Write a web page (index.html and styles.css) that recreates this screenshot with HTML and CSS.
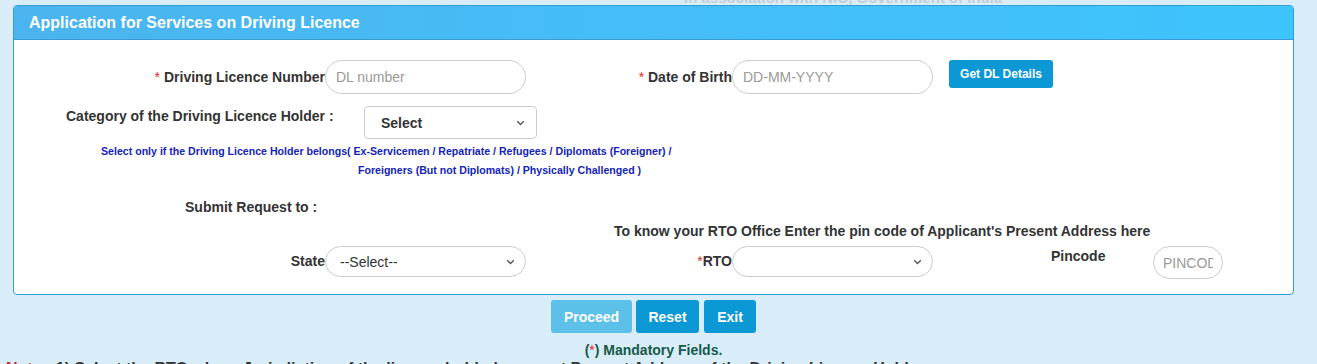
FILE: index.html
```html
<!DOCTYPE html>
<html lang="en">
<head>
<meta charset="utf-8">
<title>Application for Services on Driving Licence</title>
<link rel="stylesheet" href="styles.css">
</head>
<body>
<div class="masthead"><span>in association with NIC, Government of India</span></div>
<div class="panel">
  <div class="panel-head">Application for Services on Driving Licence</div>
  <div class="panel-body">
    <div class="row row-dl">
      <label class="lbl lbl-a"><span class="req">*</span> Driving Licence Number</label>
      <input class="pill" type="text" placeholder="DL number">
      <label class="lbl lbl-b"><span class="req">*</span> Date of Birth</label>
      <input class="pill" type="text" placeholder="DD-MM-YYYY">
      <button class="btn-dl" type="button">Get DL Details</button>
    </div>
    <div class="row row-cat">
      <label class="lbl-cat">Category of the Driving Licence Holder :</label>
      <div class="sel-wrap sel-cat">
        <select class="box-select"><option>Select</option></select>
        <svg class="chev" width="9" height="6" viewBox="0 0 9 6"><path d="M1.2 1.2l3.3 3.3 3.3-3.3" fill="none" stroke="#555" stroke-width="1.3"/></svg>
      </div>
    </div>
    <div class="hint">
      <span class="hint-1">Select only if the Driving Licence Holder belongs( Ex-Servicemen / Repatriate / Refugees / Diplomats (Foreigner) /</span>
      <span class="hint-2">Foreigners (But not Diplomats) / Physically Challenged )</span>
    </div>
    <div class="submit-to">Submit Request to :</div>
    <div class="rto-info">To know your RTO Office Enter the pin code of Applicant's Present Address here</div>
    <div class="row row-state">
      <label class="lbl lbl-a">State</label>
      <div class="sel-wrap sel-pill">
        <select class="pill-select"><option>--Select--</option></select>
        <svg class="chev" width="9" height="6" viewBox="0 0 9 6"><path d="M1.2 1.2l3.3 3.3 3.3-3.3" fill="none" stroke="#555" stroke-width="1.3"/></svg>
      </div>
      <label class="lbl lbl-b"><span class="req">*</span>RTO</label>
      <div class="sel-wrap sel-pill">
        <select class="pill-select"><option></option></select>
        <svg class="chev" width="9" height="6" viewBox="0 0 9 6"><path d="M1.2 1.2l3.3 3.3 3.3-3.3" fill="none" stroke="#555" stroke-width="1.3"/></svg>
      </div>
      <label class="lbl-pin">Pincode</label>
      <input class="pill pin" type="text" placeholder="PINCODE">
    </div>
  </div>
</div>
<div class="actions">
  <button class="btn btn-light btn-proceed" type="button">Proceed</button>
  <button class="btn btn-reset" type="button">Reset</button>
  <button class="btn btn-exit" type="button">Exit</button>
</div>
<div class="mandatory">(<span class="req">*</span>) Mandatory Fields.</div>
<div class="note"><span class="note-red">Note :</span> 1) Select the RTO where Jurisdiction of the licence holder's current Present Address of the Driving Licence Holder</div>
</body>
</html>
```
FILE: styles.css
```css
* { box-sizing: border-box; }
html, body { margin: 0; padding: 0; }
body {
  background: #d9edf8;
  font-family: "Liberation Sans", Arial, sans-serif;
  color: #333;
  width: 1317px;
  height: 364px;
  overflow: hidden;
}
.masthead {
  height: 5px;
  overflow: hidden;
  padding-left: 684px;
}
.masthead span {
  display: block;
  margin-top: -9px;
  font-size: 15px;
  line-height: 13px;
  font-weight: bold;
  color: #c3ced6;
  white-space: nowrap;
}
.panel {
  margin-left: 13px;
  width: 1281px;
  border: 1px solid #2f9fd4;
  border-radius: 4px;
  background: #fff;
  overflow: hidden;
}
.panel-head {
  height: 34px;
  padding-left: 15px;
  background: linear-gradient(to right, #4bb4ee 0%, #45bdf7 50%, #3ec4fc 100%);
  border-bottom: 1px solid #3a9bd0;
  color: #fff;
  font-size: 16px;
  font-weight: bold;
  line-height: 33px;
}
.panel-body {
  padding: 20px 0 15px 0;
}
.row { display: flex; align-items: flex-start; }
.lbl {
  font-size: 14px;
  font-weight: bold;
  line-height: 34px;
  text-align: right;
  white-space: nowrap;
}
.lbl-a { width: 311px; }
.lbl-b { width: 206px; }
.req { color: #e0262a; font-weight: normal; }
.pill {
  width: 201px;
  height: 34px;
  border: 1px solid #ccc;
  border-radius: 17px;
  padding: 0 10px;
  font-family: "Liberation Sans", Arial, sans-serif;
  font-size: 14px;
  color: #555;
  background: #fff;
  outline: none;
}
.pill::placeholder { color: #999; }
.btn-dl {
  margin-left: 16px;
  width: 104px;
  height: 28px;
  border: 0;
  border-radius: 3px;
  background: #0b98d5;
  color: #fff;
  font-family: "Liberation Sans", Arial, sans-serif;
  font-size: 12px;
  font-weight: bold;
}
.row-cat { margin-top: 12px; }
.lbl-cat {
  margin-left: 52px;
  width: 298px;
  font-size: 14px;
  font-weight: bold;
  line-height: 20px;
  white-space: nowrap;
}
.sel-wrap { position: relative; }
.sel-wrap .chev {
  position: absolute;
  top: 50%;
  margin-top: -3px;
  pointer-events: none;
}
.sel-cat .chev { right: 12px; }
.sel-pill .chev { right: 11px; }
.box-select {
  appearance: none;
  -webkit-appearance: none;
  width: 173px;
  height: 33px;
  border: 1px solid #ccc;
  border-radius: 4px;
  background: #fff;
  padding: 0 16px;
  font-family: "Liberation Sans", Arial, sans-serif;
  font-size: 14px;
  font-weight: bold;
  color: #333;
}
.pill-select {
  appearance: none;
  -webkit-appearance: none;
  display: block;
  width: 201px;
  height: 31px;
  border: 1px solid #ccc;
  border-radius: 16px;
  background: #fff;
  padding: 0 14px;
  font-family: "Liberation Sans", Arial, sans-serif;
  font-size: 14px;
  color: #333;
}
.hint {
  margin-top: 3px;
  color: #1424b8;
  font-size: 10.6px;
  font-weight: bold;
  line-height: 19px;
  white-space: nowrap;
}
.hint span { display: block; }
.hint-1 { padding-left: 87px; }
.hint-2 { padding-left: 344px; }
.submit-to {
  margin-top: 17px;
  padding-left: 171px;
  font-size: 14px;
  font-weight: bold;
  line-height: 20px;
}
.rto-info {
  margin-top: 4px;
  padding-left: 600px;
  font-size: 14px;
  font-weight: bold;
  line-height: 20px;
}
.row-state { margin-top: 5px; }
.row-state .lbl { line-height: 31px; }
.lbl-pin {
  margin-left: 118px;
  width: 102px;
  font-size: 14px;
  font-weight: bold;
  line-height: 20px;
}
.pin {
  width: 70px;
  height: 33px;
  padding: 0 9px;
}
.actions {
  margin-left: 551px;
  margin-top: 5px;
  display: flex;
  gap: 4px;
}
.btn {
  height: 33px;
  padding: 0;
  border: 0;
  border-radius: 3px;
  background: #0b98d5;
  color: #fff;
  font-family: "Liberation Sans", Arial, sans-serif;
  font-size: 14px;
  font-weight: bold;
}
.btn-light { background: #5cc0e9; }
.btn-proceed { width: 81px; }
.btn-reset { width: 63px; }
.btn-exit { width: 52px; margin-left: 1px; }
.mandatory {
  margin-left: 13px;
  width: 1281px;
  text-align: center;
  margin-top: 9px;
  font-size: 14px;
  font-weight: bold;
  line-height: 16px;
  color: #17594b;
}
.note {
  padding-left: 6px;
  margin-top: 2px;
  font-size: 16px;
  font-weight: bold;
  line-height: 18px;
  white-space: nowrap;
  color: #333;
}
.note-red { color: #d0202a; }
```
